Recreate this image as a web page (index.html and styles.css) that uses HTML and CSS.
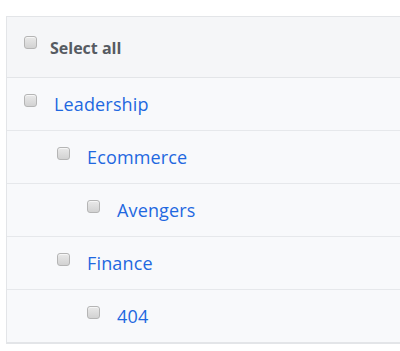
FILE: index.html
```html
<!DOCTYPE html>
<html>
<head>
<meta charset="utf-8">
<link rel="stylesheet" href="styles.css">
</head>
<body>
<div class="panel">
  <div class="header">
    <span class="cb"></span>
    <span class="label-all">Select all</span>
  </div>
  <div class="row lvl1"><span class="cb"></span><a class="item">Leadership</a></div>
  <div class="row lvl2"><span class="cb"></span><a class="item">Ecommerce</a></div>
  <div class="row lvl3"><span class="cb"></span><a class="item">Avengers</a></div>
  <div class="row lvl2"><span class="cb"></span><a class="item">Finance</a></div>
  <div class="row lvl3"><span class="cb"></span><a class="item">404</a></div>
</div>
</body>
</html>
```
FILE: styles.css
```css
html, body {
  margin: 0;
  padding: 0;
  background: #ffffff;
  overflow: hidden;
}
body {
  padding: 16px 0 0 6px;
  font-family: "Open Sans", "Noto Sans", sans-serif;
}
.panel {
  border: 1px solid #e3e5e8;
  border-right: none;
  background: #f8f9fb;
}
.header {
  display: flex;
  align-items: center;
  height: 60px;
  padding-left: 17px;
  background: #f5f6f8;
  border-bottom: 1px solid #e3e5e8;
}
.header .cb {
  margin-bottom: 9px;
}
.label-all {
  margin-left: 13px;
  margin-top: 2px;
  font-weight: 700;
  font-size: 16px;
  color: #565b62;
}
.row {
  display: flex;
  align-items: center;
  height: 52px;
  border-bottom: 1px solid #e6e8eb;
}
.row:last-child { border-bottom: 1px solid #e3e5e8; }
.lvl1 { padding-left: 17px; }
.lvl2 { padding-left: 50px; }
.lvl3 { padding-left: 80px; }
.cb {
  display: inline-block;
  box-sizing: border-box;
  width: 13px;
  height: 13px;
  border: 1px solid #b5b5b5;
  border-radius: 3px;
  background: linear-gradient(#e9e9e9, #d2d2d2);
  box-shadow: inset 0 1px 0 #f6f6f6;
  flex: none;
}
.row .cb { margin-bottom: 7px; }
.item {
  margin-left: 17px;
  font-size: 18px;
  letter-spacing: 0.15px;
  color: #1f68e0;
  text-decoration: none;
}
```
